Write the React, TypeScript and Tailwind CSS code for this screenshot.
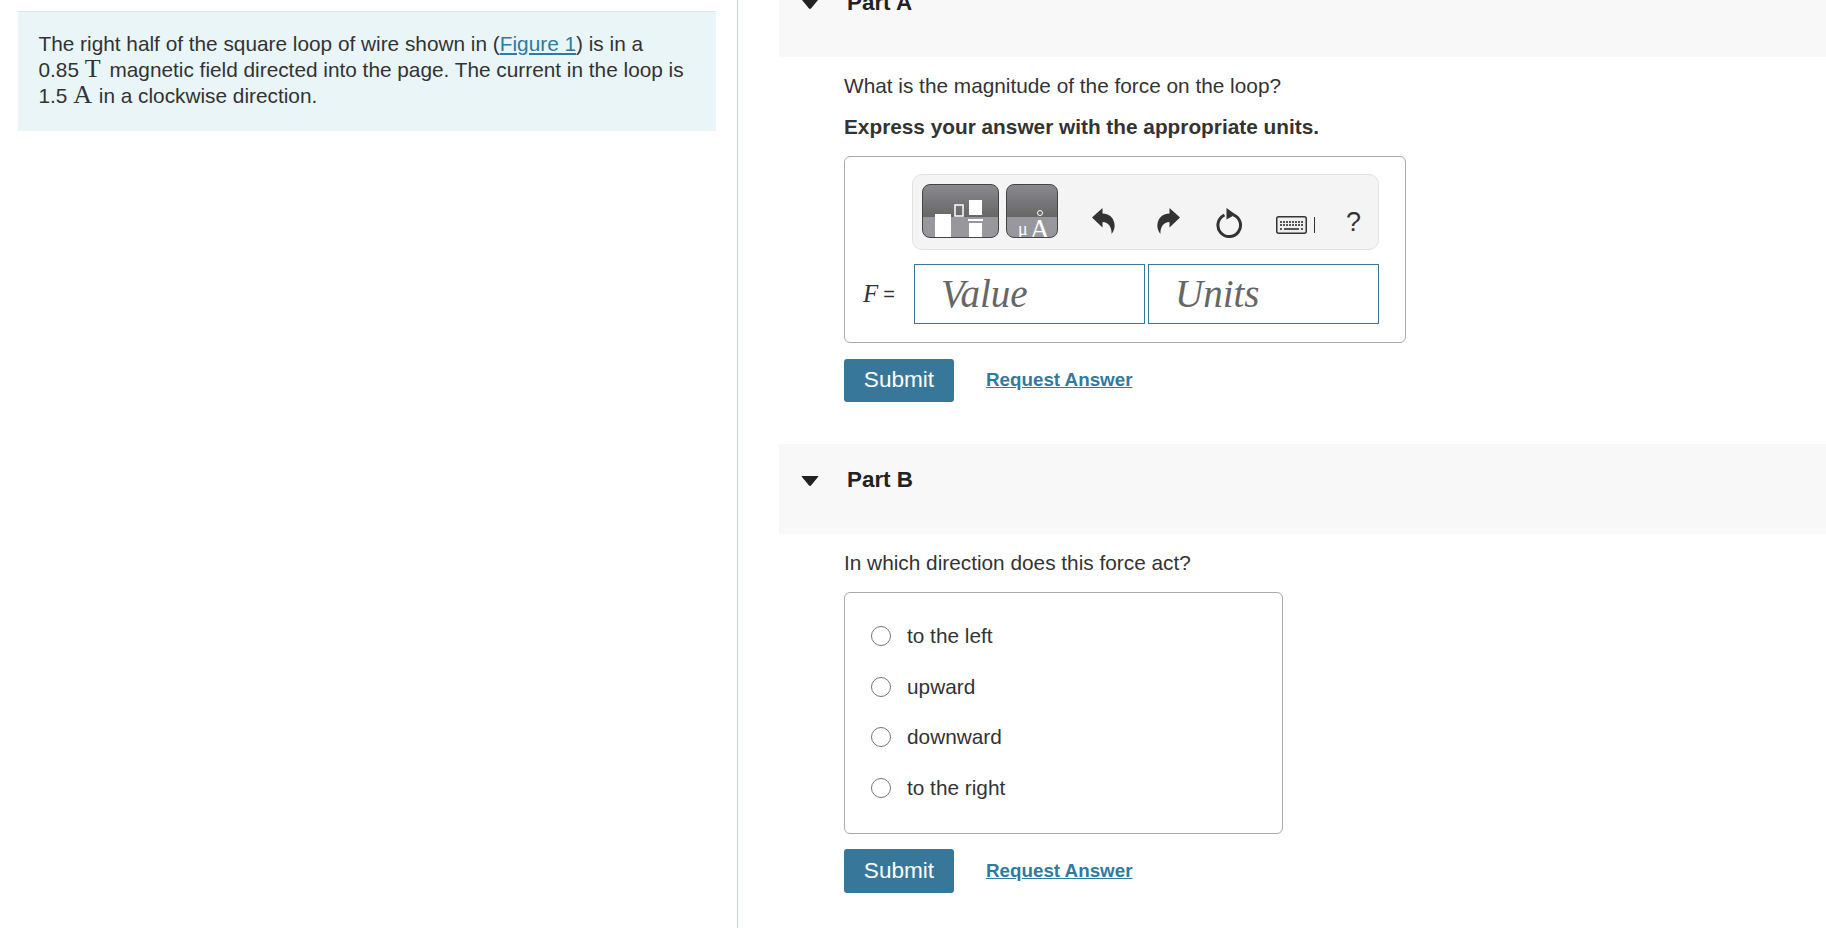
const SANS = "font-['Liberation_Sans',Arial,sans-serif]";

function Caret() {
  return (
    <svg width="18" height="10" viewBox="0 0 18 10" className="shrink-0">
      <path d="M1 0H17Q18 0 17 1L10 9.5Q9 10.3 8 9.5L1 1Q0 0 1 0Z" fill="#222" />
    </svg>
  );
}

function PartHeader({ label }: { label: string }) {
  return (
    <div className="flex h-[90px] bg-[#f8f8f8] pl-[22px] pt-[23px]">
      <div className="mt-[9px] h-[10px]">
        <Caret />
      </div>
      <div className="ml-[28px] text-[22.4px] leading-[26px] font-bold text-[#222]">{label}</div>
    </div>
  );
}

function Actions({ height, lift }: { height: string; lift?: boolean }) {
  return (
    <div className="flex items-center">
      <button className={`${height} w-[110px] rounded-[3px] bg-[#37789a] text-[22.6px] text-white ${lift ? "pb-[2px]" : ""}`}>
        Submit
      </button>
      <a href="#" className={`ml-[32px] text-[18.8px] font-bold text-[#2f7a9e] underline ${lift ? "mb-[2px]" : ""}`}>
        Request Answer
      </a>
    </div>
  );
}

function TemplateButton() {
  return (
    <div className="h-[54px] w-[77px] overflow-hidden rounded-[8px] border border-[#444] bg-[linear-gradient(#8a898e,#666_62%,#98979d_62%,#98979d)]">
      <svg width="75" height="52" viewBox="0 0 75 52">
        <rect x="12" y="29" width="16" height="23" fill="#fff" />
        <rect x="32" y="20" width="8" height="11" fill="none" stroke="#fff" strokeWidth="1.5" />
        <rect x="46" y="15" width="13" height="15" fill="#fff" />
        <rect x="45" y="34" width="15" height="2" fill="#fff" />
        <rect x="46" y="38" width="13" height="14" fill="#fff" />
      </svg>
    </div>
  );
}

function UnitsButton() {
  return (
    <div className="ml-[7px] h-[54px] w-[52px] overflow-hidden rounded-[8px] border border-[#444] bg-[linear-gradient(#8a898e,#666_62%,#98979d_62%,#98979d)]">
      <svg width="50" height="52" viewBox="0 0 50 52">
        <circle cx="33" cy="28" r="2.5" fill="none" stroke="#fff" strokeWidth="1" />
        <text x="11" y="50" fontSize="18" fill="#fff" fontFamily="Liberation Serif">μ</text>
        <text x="23" y="53" fontSize="27" fill="#fff" fontFamily="Liberation Serif">A</text>
      </svg>
    </div>
  );
}

function UndoIcon({ flip }: { flip?: boolean }) {
  return (
    <svg width="23" height="26" viewBox="0 0 23 26" className={flip ? "-scale-x-100" : ""}>
      <path d="M0 9.5L10.5 0V5.5C18.5 5.5 23.5 12 22.5 19.5C22 22.5 20.8 24.5 19.5 26C20 20 17 14 10.5 14V19.5Z" fill="#333" />
    </svg>
  );
}

function ResetIcon() {
  return (
    <svg width="27" height="30" viewBox="0 0 27 30">
      <path d="M8.5 7A11.3 11.3 0 1 0 17.5 6.8" fill="none" stroke="#333" strokeWidth="3" />
      <path d="M10.5 0L19.5 6.5L10.5 11.5Z" fill="#333" />
    </svg>
  );
}

function KeyboardIcon() {
  const rows = [
    { y: 5, xs: [4, 7, 10, 13, 16, 19, 22, 25] },
    { y: 8, xs: [4, 7, 10, 13, 16, 19, 22, 25] },
  ];
  return (
    <svg width="31" height="18" viewBox="0 0 31 18">
      <rect x="0.75" y="0.75" width="29.5" height="16.5" rx="2" fill="#eee" stroke="#333" strokeWidth="1.5" />
      {rows.map((r) => r.xs.map((x) => <rect key={`${r.y}-${x}`} x={x} y={r.y} width="2" height="2" fill="#555" />))}
      <rect x="4" y="12" width="2" height="2" fill="#555" />
      <rect x="8" y="12" width="15" height="2" fill="#555" />
      <rect x="25" y="12" width="2" height="2" fill="#555" />
    </svg>
  );
}

function Toolbar() {
  return (
    <div className="ml-[67px] flex h-[76px] w-[467px] items-start rounded-[10px] border border-[#e2e2e2] bg-[#f4f4f4] pl-[9px] pt-[9px]">
      <TemplateButton />
      <UnitsButton />
      <div className="mt-[24px] ml-[34px]"><UndoIcon /></div>
      <div className="mt-[24px] ml-[42px]"><UndoIcon flip /></div>
      <div className="mt-[24px] ml-[36px]"><ResetIcon /></div>
      <div className="mt-[32px] ml-[33px]"><KeyboardIcon /></div>
      <div className="mt-[33px] ml-[7px] h-[16px] w-px bg-[#333]" />
      <div className="mt-[21px] ml-[31px] text-[27px] leading-[34px] text-[#333]">?</div>
    </div>
  );
}

function FieldBox({ placeholder }: { placeholder: string }) {
  return (
    <div className="flex h-[60px] w-[231px] items-center border border-[#37789a] pl-[26px] font-['Liberation_Serif',serif] text-[39px] text-[#666] italic">
      {placeholder}
    </div>
  );
}

const choices = ["to the left", "upward", "downward", "to the right"];

export default function App() {
  return (
    <div className={`${SANS} flex h-[928px] overflow-hidden bg-white text-[20.8px] leading-[26px] text-[#333]`}>
      <div className="h-full w-[738px] shrink-0 border-r border-[#c9d3dc] pl-[18px] pt-[11px]">
        <div className="h-[120px] w-[698px] border-t border-[#dde3e6] bg-[#e9f5f7] pl-[20.5px] pr-[20px] pt-[19px]">
          The right half of the square loop of wire shown in (
          <a href="#" className="text-[#2f7a9e] underline">Figure 1</a>
          ) is in a
          <br />
          0.85 <span className="mr-[3px] font-['Liberation_Serif',serif] text-[26px] leading-[20px]">T</span> magnetic field directed into the page. The current in the loop is
          <br />
          1.5 <span className="mr-[1px] font-['Liberation_Serif',serif] text-[26px] leading-[20px]">A</span> in a clockwise direction.
        </div>
      </div>

      <div className="min-w-0 flex-1 pl-[41px]">
        <div className="-mt-[33px]">
          <PartHeader label="Part A" />
        </div>
        <div className="pl-[65px]">
          <p className="mt-[16px]">What is the magnitude of the force on the loop?</p>
          <p className="mt-[15px] font-bold">Express your answer with the appropriate units.</p>

          <div className="mt-[16px] h-[187px] w-[562px] rounded-[6px] border border-[#aaa] pt-[17px]">
            <Toolbar />
            <div className="mt-[14px] flex items-center">
              <div className="ml-[18px] flex w-[51px] items-center font-['Liberation_Serif',serif] text-[25px] text-[#333]">
                <i>F</i>
                <span className="ml-[5px] font-['Liberation_Sans',sans-serif] text-[20px]">=</span>
              </div>
              <FieldBox placeholder="Value" />
              <div className="ml-[3px]">
                <FieldBox placeholder="Units" />
              </div>
            </div>
          </div>

          <div className="mt-[16px]">
            <Actions height="h-[43px]" lift />
          </div>
        </div>

        <div className="mt-[42px]">
          <PartHeader label="Part B" />
        </div>
        <div className="pl-[65px]">
          <p className="mt-[16px]">In which direction does this force act?</p>
          <div className="mt-[16px] h-[242px] w-[439px] rounded-[6px] border border-[#aaa] pl-[25.5px] pt-[18px]">
            {choices.map((c) => (
              <div key={c} className="flex h-[50.5px] items-center">
                <span className="h-[20px] w-[20px] rounded-full border-[1.5px] border-[#757575] bg-white" />
                <span className="ml-[16.5px]">{c}</span>
              </div>
            ))}
          </div>
          <div className="mt-[15px]">
            <Actions height="h-[44px]" />
          </div>
        </div>
      </div>
    </div>
  );
}
